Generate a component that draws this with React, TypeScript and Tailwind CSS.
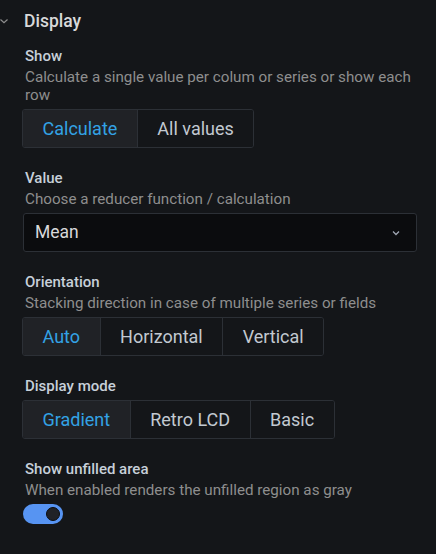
import { useState } from "react";

type Opt = { label: string; value: string };

const showOptions: Opt[] = [
    { label: "Calculate", value: "calc" },
    { label: "All values", value: "all" },
];
const orientationOptions: Opt[] = [
    { label: "Auto", value: "auto" },
    { label: "Horizontal", value: "h" },
    { label: "Vertical", value: "v" },
];
const modeOptions: Opt[] = [
    { label: "Gradient", value: "gradient" },
    { label: "Retro LCD", value: "lcd" },
    { label: "Basic", value: "basic" },
];

function RadioGroup({ options, value, onChange }: { options: Opt[]; value: string; onChange: (v: string) => void }) {
    return (
        <div className="inline-flex h-[39px] rounded-[3px] border border-[#2c3036] overflow-hidden">
            {options.map((o, i) => (
                <button
                    key={o.value}
                    onClick={() => onChange(o.value)}
                    className={
                        "px-[19.5px] text-[18px] leading-none " +
                        (i > 0 ? "border-l border-[#2c3036] " : "") +
                        (o.value === value ? "bg-[#202226] text-[#33a2e5]" : "bg-[#141619] text-[#c2c9d1]")
                    }
                >
                    {o.label}
                </button>
            ))}
        </div>
    );
}

function Field({ label, description, children }: { label: string; description?: string; children: React.ReactNode }) {
    return (
        <div className="pb-[21px]">
            <div className="pl-[3px] text-[15px] leading-[18px] font-medium text-[#c7d0d9]">{label}</div>
            {description && (
                <div className="pl-[3px] mt-[3px] text-[15.2px] leading-[18px] text-[#8e8e8e]">{description}</div>
            )}
            <div className="mt-[5px]">{children}</div>
        </div>
    );
}

export default function App() {
    const [show, setShow] = useState("calc");
    const [orientation, setOrientation] = useState("auto");
    const [mode, setMode] = useState("gradient");
    const [unfilled, setUnfilled] = useState(true);

    return (
        <main className="w-[436px] h-[554px] bg-[#141619] font-['Roboto',sans-serif] overflow-hidden">
            <div className="flex items-center h-[42px]">
                <svg className="w-[10px] h-[10px] ml-[-1px] mr-[15px]" viewBox="0 0 10 10" fill="none">
                    <path d="M1.5 3.5 L5 6.8 L8.5 3.5" stroke="#8e8e8e" strokeWidth="1.2" />
                </svg>
                <h2 className="text-[17.5px] font-medium text-[#d8d9da]">Display</h2>
            </div>

            <div className="pl-[22px] pr-[19px] pt-[5px]">
                <Field label="Show" description="Calculate a single value per colum or series or show each row">
                    <RadioGroup options={showOptions} value={show} onChange={setShow} />
                </Field>

                <Field label="Value" description="Choose a reducer function / calculation">
                    <div className="ml-[1px] flex items-center justify-between h-[39px] rounded-[3px] border border-[#2c3036] bg-[#0b0c0e] pl-[11px] pr-[15px]">
                        <span className="text-[17.5px] text-[#d8d9da]">Mean</span>
                        <svg className="w-[10px] h-[10px]" viewBox="0 0 10 10" fill="none">
                            <path d="M2 3.5 L5 6.5 L8 3.5" stroke="#9fa7b3" strokeWidth="1.3" />
                        </svg>
                    </div>
                </Field>

                <Field label="Orientation" description="Stacking direction in case of multiple series or fields">
                    <RadioGroup options={orientationOptions} value={orientation} onChange={setOrientation} />
                </Field>

                <Field label="Display mode">
                    <RadioGroup options={modeOptions} value={mode} onChange={setMode} />
                </Field>

                <Field label="Show unfilled area" description="When enabled renders the unfilled region as gray">
                    <button
                        onClick={() => setUnfilled(!unfilled)}
                        className={
                            "ml-[1px] flex items-center w-[40px] h-[20px] rounded-full px-[3px] " +
                            (unfilled ? "bg-[#5794f2] justify-end" : "bg-[#2c3235] justify-start")
                        }
                    >
                        <span className="w-[14px] h-[14px] rounded-full bg-[#202226] border border-[#0b0c0e]" />
                    </button>
                </Field>
            </div>
        </main>
    );
}
